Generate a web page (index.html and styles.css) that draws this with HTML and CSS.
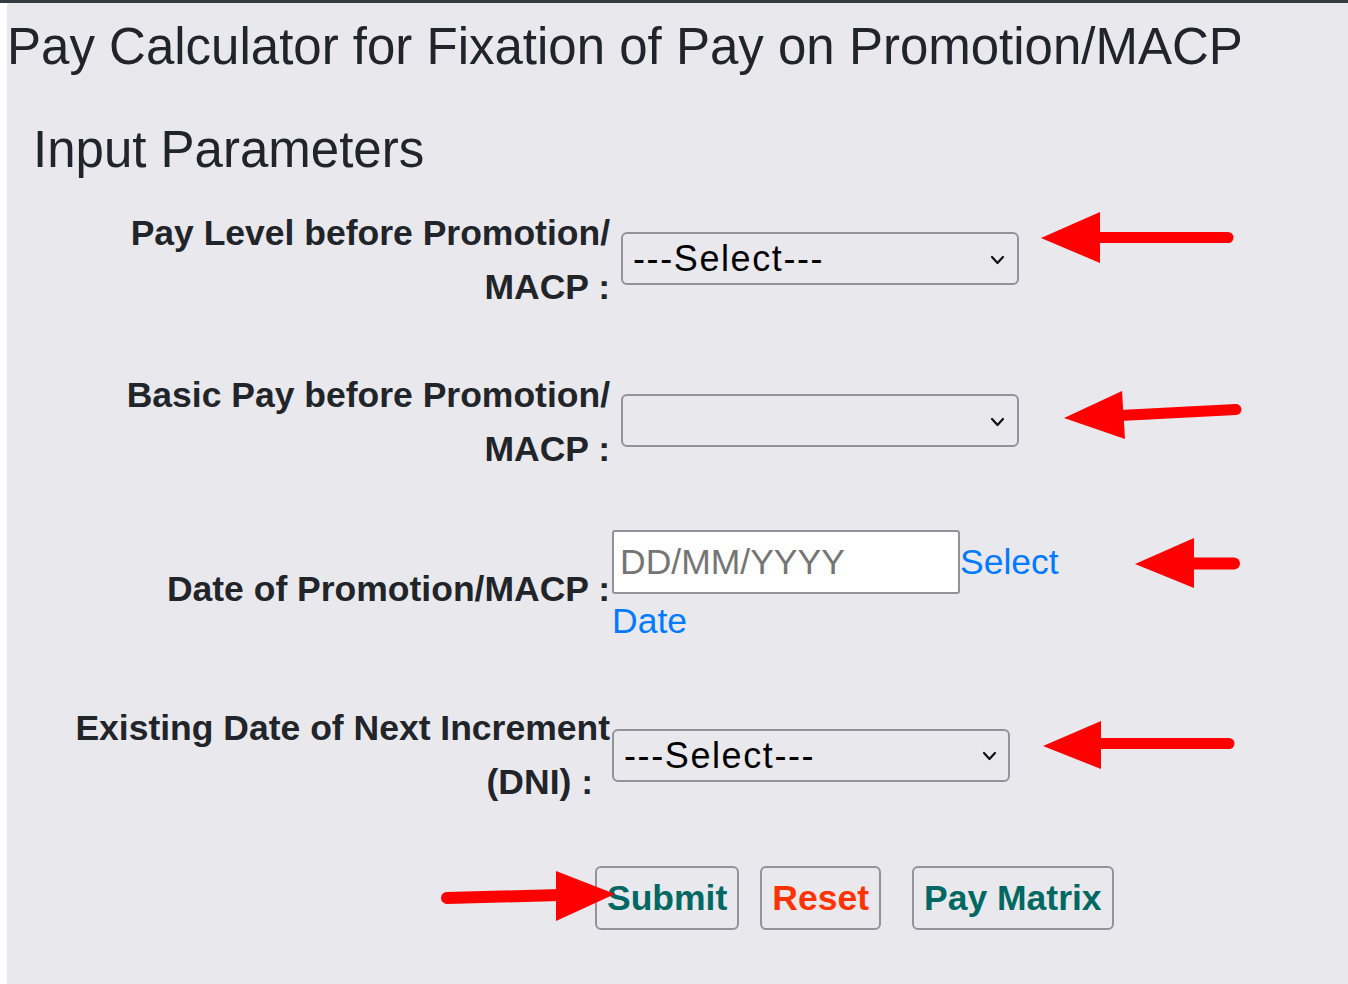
FILE: index.html
```
<!DOCTYPE html>
<html lang="en">
<head>
<meta charset="utf-8">
<title>Pay Calculator for Fixation of Pay on Promotion/MACP</title>
<link rel="stylesheet" href="styles.css">
</head>
<body>
<div class="topbar"></div>
<main class="page">
  <h1 class="title">Pay Calculator for Fixation of Pay on Promotion/MACP</h1>
  <section class="panel">
    <h2 class="subtitle">Input Parameters</h2>

    <div class="field">
      <label class="lbl">Pay Level before Promotion/<br>MACP :</label>
      <div class="ctl ctl-sel">
        <div class="sel-wrap">
          <select class="sel"><option>---Select---</option></select>
          <svg class="chev" width="15" height="10" viewBox="0 0 15 10"><path d="M2 2 L7.5 8 L13 2" fill="none" stroke="#111" stroke-width="2.2" stroke-linecap="round" stroke-linejoin="round"/></svg>
        </div>
      </div>
    </div>

    <div class="field field-gap">
      <label class="lbl">Basic Pay before Promotion/<br>MACP :</label>
      <div class="ctl ctl-sel">
        <div class="sel-wrap">
          <select class="sel"><option></option></select>
          <svg class="chev" width="15" height="10" viewBox="0 0 15 10"><path d="M2 2 L7.5 8 L13 2" fill="none" stroke="#111" stroke-width="2.2" stroke-linecap="round" stroke-linejoin="round"/></svg>
        </div>
      </div>
    </div>

    <div class="field field-gap">
      <label class="lbl">Date of Promotion/MACP :</label>
      <div class="ctl ctl-date"><input class="date" type="text" placeholder="DD/MM/YYYY"><a class="pick" href="#">Select Date</a></div>
    </div>

    <div class="field field-gap4">
      <label class="lbl"><span class="ln">Existing Date of Next Increment</span><span class="ln ln-short">(DNI) :</span></label>
      <div class="ctl ctl-near">
        <div class="sel-wrap">
          <select class="sel"><option>---Select---</option></select>
          <svg class="chev chev-4" width="15" height="10" viewBox="0 0 15 10"><path d="M2 2 L7.5 8 L13 2" fill="none" stroke="#111" stroke-width="2.2" stroke-linecap="round" stroke-linejoin="round"/></svg>
        </div>
      </div>
    </div>

    <div class="actions">
      <button class="btn btn-teal" type="button">Submit</button>
      <button class="btn btn-red btn-reset" type="reset">Reset</button>
      <button class="btn btn-teal btn-matrix" type="button">Pay Matrix</button>
    </div>
  </section>
</main>

<svg class="annot" width="1348" height="984" viewBox="0 0 1348 984">
  <g fill="#ff0000" stroke="#ff0000" stroke-linecap="round">
    <polygon points="1041,238 1100,212 1100,263" stroke="none"/>
    <line x1="1098" y1="237.5" x2="1228" y2="237.5" stroke-width="11"/>

    <polygon points="1064,418 1122,391 1125,439" stroke="none"/>
    <line x1="1120" y1="415.5" x2="1236" y2="409.5" stroke-width="11"/>

    <polygon points="1135,564 1194,538 1194,588" stroke="none"/>
    <line x1="1190" y1="563.5" x2="1234" y2="563.5" stroke-width="12"/>

    <polygon points="1043,746 1101,721 1101,769" stroke="none"/>
    <line x1="1098" y1="743.5" x2="1229" y2="743.5" stroke-width="11"/>

    <line x1="447" y1="898" x2="560" y2="895" stroke-width="12"/>
    <polygon points="615,894 556,871 556,921" stroke="none"/>
  </g>
</svg>
</body>
</html>
```
FILE: styles.css
```
html, body {
  margin: 0;
  padding: 0;
}

body {
  background: #ffffff;
  font-family: "Liberation Sans", Arial, Helvetica, sans-serif;
  color: #212529;
  position: relative;
}

.topbar {
  height: 3px;
  background: #343a40;
}

.page {
  margin-left: 7px;
  background: #e9e8ed;
  min-height: 981px;
  box-sizing: border-box;
  padding-top: 13px;
}

.title {
  margin: 0;
  font-size: 51px;
  font-weight: 400;
  line-height: 61px;
  white-space: nowrap;
}

.subtitle {
  margin: 42px 0 0 26px;
  font-size: 51px;
  font-weight: 400;
  line-height: 61px;
}

.field {
  display: flex;
  align-items: center;
  margin-top: 26px;
}

.field-gap {
  margin-top: 54px;
}

.field-gap4 {
  margin-top: 53px;
}

.lbl {
  flex: 0 0 603px;
  width: 603px;
  text-align: right;
  font-weight: 700;
  font-size: 35.5px;
  line-height: 54px;
}

.ln {
  display: block;
}

.ln-short {
  padding-right: 17px;
}

.ctl {
  font-size: 35.5px;
  line-height: 54px;
}

.ctl-sel {
  margin-left: 11px;
  margin-top: -3px;
}

.ctl-near {
  margin-left: 2px;
}

.ctl-date {
  margin-left: 2px;
  width: 470px;
}

.sel-wrap {
  position: relative;
  width: 398px;
  height: 53px;
}

.sel {
  appearance: none;
  -webkit-appearance: none;
  display: block;
  width: 398px;
  height: 53px;
  box-sizing: border-box;
  border: 2px solid #939299;
  border-radius: 6px;
  background: transparent;
  color: #000;
  font-family: "Liberation Sans", Arial, sans-serif;
  font-size: 36px;
  letter-spacing: 1.6px;
  padding: 0 40px 0 10px;
  margin: 0;
}

.chev {
  position: absolute;
  right: 14px;
  top: 23px;
  pointer-events: none;
}

.chev-4 {
  right: 13px;
  top: 22px;
}

.date {
  width: 348px;
  height: 64px;
  box-sizing: border-box;
  border: 2px solid #939299;
  border-radius: 3px;
  background: #ffffff;
  font-family: "Liberation Sans", Arial, sans-serif;
  font-size: 35.5px;
  padding: 0 6px;
  margin: 0;
  color: #000;
}

.date::placeholder {
  color: #757575;
}

.pick {
  color: #007bff;
  text-decoration: none;
}

.actions {
  display: flex;
  margin-top: 57px;
  padding-left: 588px;
}

.btn {
  height: 64px;
  box-sizing: border-box;
  border: 2px solid #939299;
  border-radius: 6px;
  background: transparent;
  font-family: "Liberation Sans", Arial, sans-serif;
  font-weight: 700;
  font-size: 35.5px;
  padding: 0 10px;
  margin: 0;
}

.btn-teal {
  color: #006862;
}

.btn-red {
  color: #ff3300;
}

.btn-reset {
  margin-left: 21px;
}

.btn-matrix {
  margin-left: 31px;
}

.annot {
  position: absolute;
  left: 0;
  top: 0;
  pointer-events: none;
}
```
